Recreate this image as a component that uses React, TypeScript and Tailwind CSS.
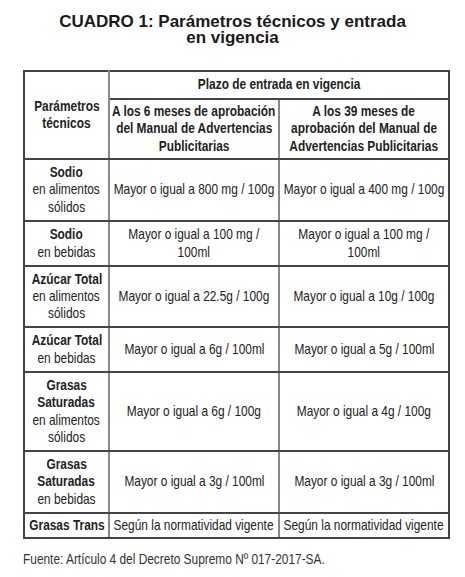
import React from "react";

const sans = { fontFamily: '"Liberation Sans", Arial, sans-serif' };

function L({ children, bold }: { children: React.ReactNode; bold?: boolean }) {
  return (
    <div className="flex justify-center">
      <span className={"whitespace-nowrap scale-x-[0.82] " + (bold ? "font-bold" : "")}>{children}</span>
    </div>
  );
}

type Row = { bold: string[]; rest: string[]; a: string[]; b: string[]; h: string };

const rows: Row[] = [
  { bold: ["Sodio"], rest: ["en alimentos", "sólidos"], a: ["Mayor o igual a 800 mg / 100g"], b: ["Mayor o igual a 400 mg / 100g"], h: "h-[62px]" },
  { bold: ["Sodio"], rest: ["en bebidas"], a: ["Mayor o igual a 100 mg /", "100ml"], b: ["Mayor o igual a 100 mg /", "100ml"], h: "h-[45px]" },
  { bold: ["Azúcar Total"], rest: ["en alimentos", "sólidos"], a: ["Mayor o igual a 22.5g / 100g"], b: ["Mayor o igual a 10g / 100g"], h: "h-[61px]" },
  { bold: ["Azúcar Total"], rest: ["en bebidas"], a: ["Mayor o igual a 6g / 100ml"], b: ["Mayor o igual a 5g / 100ml"], h: "h-[45px]" },
  { bold: ["Grasas", "Saturadas"], rest: ["en alimentos", "sólidos"], a: ["Mayor o igual a 6g / 100g"], b: ["Mayor o igual a 4g / 100g"], h: "h-[79px]" },
  { bold: ["Grasas", "Saturadas"], rest: ["en bebidas"], a: ["Mayor o igual a 3g / 100ml"], b: ["Mayor o igual a 3g / 100ml"], h: "h-[62px]" },
  { bold: ["Grasas Trans"], rest: [], a: ["Según la normatividad vigente"], b: ["Según la normatividad vigente"], h: "h-[25px]" },
];

export default function App() {
  return (
    <div className="w-[465px] h-[577px] bg-white text-[#222] overflow-hidden" style={sans}>
      <h1 className="pt-[14px] text-center text-[17px] leading-[16px] font-bold text-[#1a1a1a]">
        CUADRO 1: Parámetros técnicos y entrada
        <br />
        en vigencia
      </h1>
      <div className="px-[23px] pt-[24px]">
        <table className="w-[425px] border-collapse table-fixed border-2 border-[#3a3a3a] text-[14.5px] leading-[17.3px] text-center">
          <colgroup>
            <col className="w-[85px]" />
            <col className="w-[170px]" />
            <col className="w-[170px]" />
          </colgroup>
          <tbody>
            <tr className="h-[28px]">
              <td rowSpan={2} className="border-2 border-[#444] border-r-[#888] align-middle p-0">
                <L bold>Parámetros</L>
                <L bold>técnicos</L>
              </td>
              <td colSpan={2} className="border-2 border-[#444] align-middle p-0">
                <L bold>Plazo de entrada en vigencia</L>
              </td>
            </tr>
            <tr className="h-[60px]">
              <td className="border-2 border-[#444] border-r-[#888] border-l-[#888] align-middle p-0">
                <L bold>A los 6 meses de aprobación</L>
                <L bold>del Manual de Advertencias</L>
                <L bold>Publicitarias</L>
              </td>
              <td className="border-2 border-[#444] border-l-[#888] align-middle p-0">
                <L bold>A los 39 meses de</L>
                <L bold>aprobación del Manual de</L>
                <L bold>Advertencias Publicitarias</L>
              </td>
            </tr>
            {rows.map((r, i) => (
              <tr key={i} className={r.h}>
                <td className="border-2 border-[#444] border-r-[#888] align-middle p-0">
                  {r.bold.map((t, j) => (
                    <L key={"b" + j} bold>{t}</L>
                  ))}
                  {r.rest.map((t, j) => (
                    <L key={"r" + j}>{t}</L>
                  ))}
                </td>
                <td className="border-2 border-[#444] border-l-[#888] border-r-[#888] align-middle p-0">
                  {r.a.map((t, j) => (
                    <L key={j}>{t}</L>
                  ))}
                </td>
                <td className="border-2 border-[#444] border-l-[#888] align-middle p-0">
                  {r.b.map((t, j) => (
                    <L key={j}>{t}</L>
                  ))}
                </td>
              </tr>
            ))}
          </tbody>
        </table>
        <p className="pt-[12px] text-[14.5px] leading-[17px] text-[#333]">
          <span className="inline-block whitespace-nowrap scale-x-[0.82] origin-left">
            Fuente: Artículo 4 del Decreto Supremo Nº 017-2017-SA.
          </span>
        </p>
      </div>
    </div>
  );
}
